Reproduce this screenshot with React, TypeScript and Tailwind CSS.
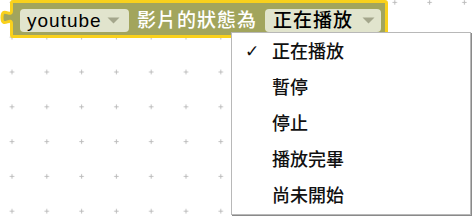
import React from "react";

const cjk = '"Liberation Sans", "Noto Sans CJK TC", "Noto Sans CJK SC", sans-serif';

function Arrow() {
  return (
    <svg width="13" height="7" viewBox="0 0 13 7" className="shrink-0">
      <path d="M0.5 0.5 L12.5 0.5 L6.5 6.5 Z" fill="#a4a68c" />
    </svg>
  );
}

function Grid() {
  return (
    <svg className="absolute inset-0 pointer-events-none" width="474" height="220">
      <defs>
        <pattern id="g" x="-5.4" y="-15" width="34.8" height="34.8" patternUnits="userSpaceOnUse">
          <path d="M17.4 15.2 V19.6 M15.2 17.4 H19.6" stroke="#bdbdbd" strokeWidth="1.1" />
        </pattern>
      </defs>
      <rect width="474" height="220" fill="url(#g)" />
    </svg>
  );
}

export default function App() {
  const menuItems = ["正在播放", "暫停", "停止", "播放完畢", "尚未開始"];
  return (
    <div className="relative w-[474px] h-[220px] bg-white overflow-hidden" style={{ fontFamily: cjk }}>
      <Grid />
      <div className="relative flex">
        <div className="relative ml-[10px] flex items-start border-[3px] border-[#f9d11c] bg-[#a2a55d] rounded-[3px] pl-[7px] pr-[4px] pt-[6px] pb-[3px]">
          <div className="flex items-center justify-between w-[109px] h-[23px] rounded-[4px] bg-[#e1e4cd] pl-[7px] pr-[9px]">
            <span className="text-[19px] leading-[23px] tracking-[1px] text-black" style={{ fontFamily: '"Liberation Sans", Arial, sans-serif' }}>youtube</span>
            <Arrow />
          </div>
          <span className="ml-[8px] w-[121px] h-[23px] text-[19px] leading-[23px] tracking-[1px] font-medium text-white whitespace-nowrap">影片的狀態為</span>
          <div className="ml-[7px] flex items-center justify-between w-[116px] h-[23px] rounded-[4px] bg-[#e1e4cd] pl-[8px] pr-[6px]">
            <span className="text-[19px] leading-[23px] tracking-[1px] font-medium text-black whitespace-nowrap">正在播放</span>
            <Arrow />
          </div>
        </div>
        <svg className="absolute left-0 top-0" width="16" height="40" viewBox="0 0 16 40">
          <path d="M11.5 8 v3 c0 7 -9.5 -5 -9.5 6.5 s9.5 -1.5 9.5 6.5 v3 H15 V8 Z" fill="#a2a55d" />
          <path d="M11.5 8 v3 c0 7 -9.5 -5 -9.5 6.5 s9.5 -1.5 9.5 6.5 v3" fill="none" stroke="#f9d11c" strokeWidth="3" />
        </svg>
      </div>
      <div className="absolute left-[231px] top-[32px] w-[240px] bg-white border border-[#b8b8b8] shadow-[1px_1px_0_#8a8a8a] pt-[1px]">
        {menuItems.map((t, i) => (
          <div key={t} className="flex items-center h-9 text-[18px] font-medium text-[#111]">
            <span className="w-[40px] pl-[13px] text-[17px]" style={{ fontFamily: '"DejaVu Sans", sans-serif' }}>
              {i === 0 ? "✓" : ""}
            </span>
            <span className="whitespace-nowrap">{t}</span>
          </div>
        ))}
      </div>
    </div>
  );
}
